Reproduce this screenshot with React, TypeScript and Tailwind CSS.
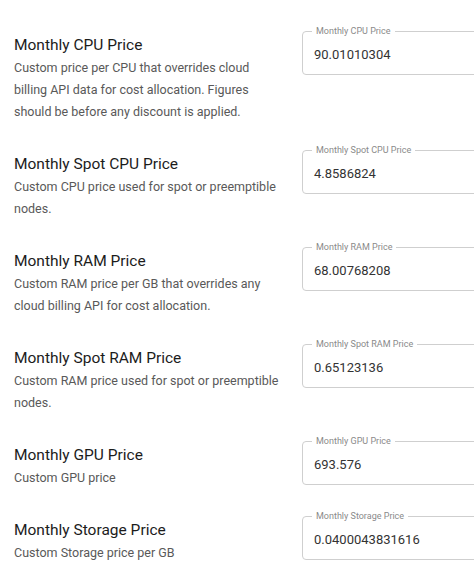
const rows = [
  {
    title: 'Monthly CPU Price',
    description:
      'Custom price per CPU that overrides cloud billing API data for cost allocation. Figures should be before any discount is applied.',
    value: '90.01010304',
  },
  {
    title: 'Monthly Spot CPU Price',
    description: 'Custom CPU price used for spot or preemptible nodes.',
    value: '4.8586824',
  },
  {
    title: 'Monthly RAM Price',
    description: 'Custom RAM price per GB that overrides any cloud billing API for cost allocation.',
    value: '68.00768208',
  },
  {
    title: 'Monthly Spot RAM Price',
    description: 'Custom RAM price used for spot or preemptible nodes.',
    value: '0.65123136',
  },
  {
    title: 'Monthly GPU Price',
    description: 'Custom GPU price',
    value: '693.576',
  },
  {
    title: 'Monthly Storage Price',
    description: 'Custom Storage price per GB',
    value: '0.0400043831616',
  },
];

function PriceField({ label, value }: { label: string; value: string }) {
  return (
    <fieldset className="-mt-[7px] w-[220px] shrink-0 rounded-[4px] border border-[#cfcfcf]">
      <legend className="ml-[9px] px-[4px] text-[9px] leading-[11px] text-[#8a8a8a]">{label}</legend>
      <div className="pt-[10px] pb-[11px] pl-[11px] text-[13px] leading-[16px] text-[#333]">{value}</div>
    </fieldset>
  );
}

export default function App() {
  return (
    <div className="w-[474px] overflow-hidden bg-white pt-[33px] pl-[14px] font-['Roboto',sans-serif]">
      <div className="flex flex-col gap-[29px]">
        {rows.map((row) => (
          <div key={row.title} className="flex items-start">
            <div className="w-[288px] shrink-0 pr-[20px]">
              <h3 className="text-[15.5px] leading-[24px] font-normal text-[#1c1c1c]">{row.title}</h3>
              <p className="text-[12.5px] leading-[22px] text-[#595959]">{row.description}</p>
            </div>
            <PriceField label={row.title} value={row.value} />
          </div>
        ))}
      </div>
    </div>
  );
}
